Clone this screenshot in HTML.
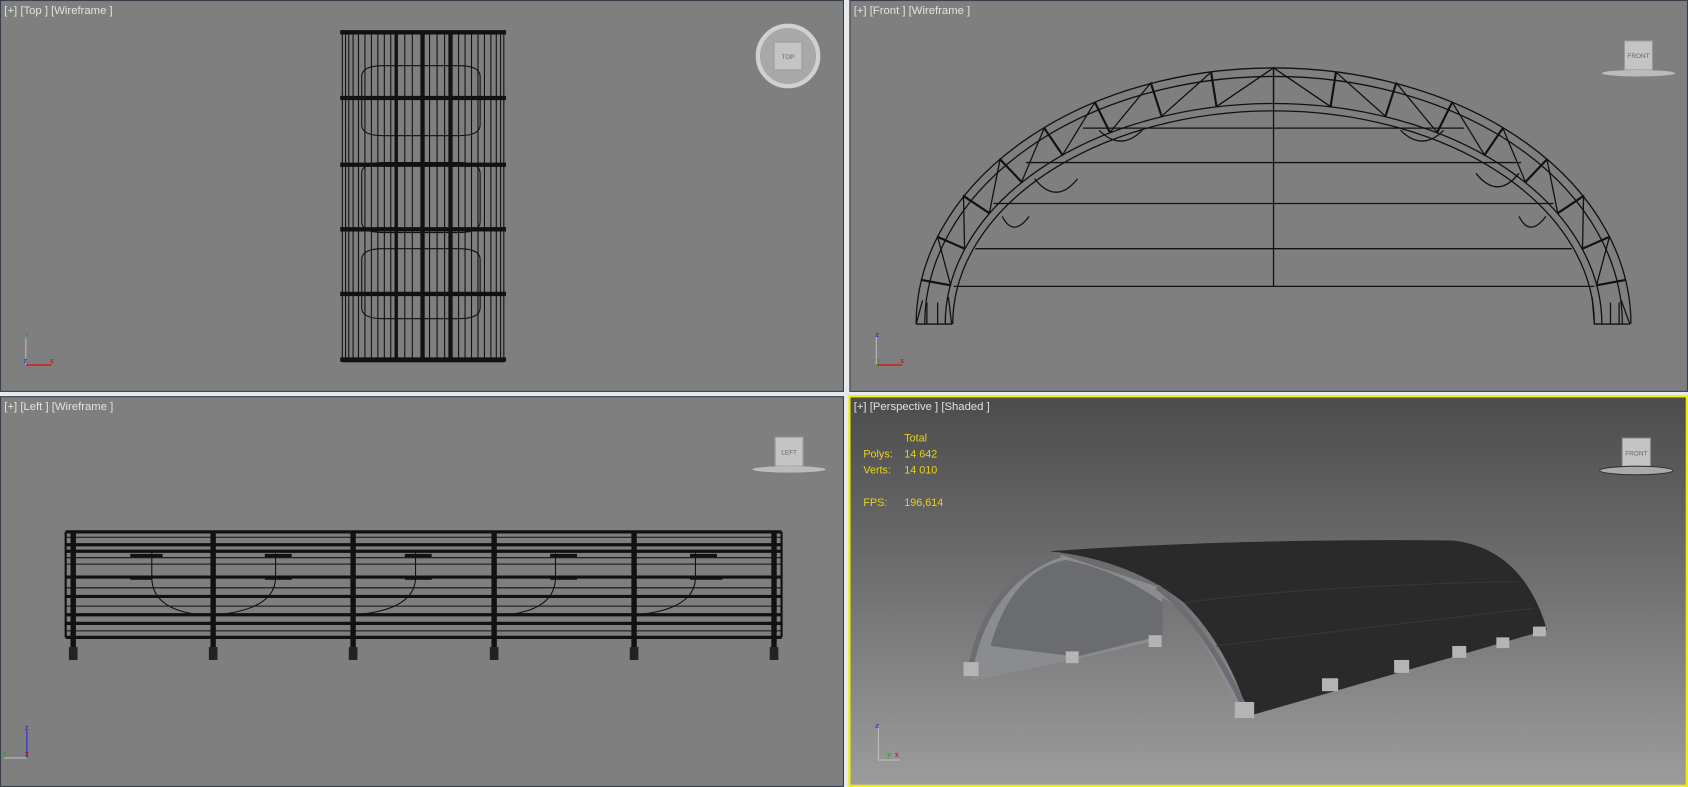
<!DOCTYPE html>
<html><head><meta charset="utf-8"><style>
html,body{margin:0;padding:0;width:1688px;height:787px;overflow:hidden;background:#e6eaee}
#s{position:absolute;left:0;top:0;width:1568px;height:731px;transform:scale(1.07653,1.07661);transform-origin:0 0}
.vp{position:absolute;background:#7f7f7f;box-sizing:border-box;border:1px solid #39404c;overflow:hidden}
.lbl{position:absolute;left:3px;top:3px;font:10.5px "Liberation Sans",sans-serif;color:#e2e2e2;white-space:pre}
svg{position:absolute;left:0;top:0}
.st{position:absolute;font:10px "Liberation Sans",sans-serif;color:#e8d21a}
</style></head><body><div id="s">

<div class="vp" style="left:0;top:0;width:784px;height:364px">
<div class="lbl">[+] [Top ] [Wireframe ]</div>
<svg width="784" height="364">
<g stroke="#111" fill="none" stroke-width="1">
<rect x="317" y="28" width="150" height="307"/>
<path d="M320 28V335M323 28V335M327 28V335M332 28V335M338 28V335M344 28V335M350 28V335M356 28V335M362 28V335M368 28V335M375 28V335M382 28V335M390 28V335M398 28V335M405 28V335M412 28V335M419 28V335M425 28V335M431 28V335M437 28V335M443 28V335M449 28V335M455 28V335M460 28V335M464 28V335"/>
<path d="M367 28V335M392 28V335M417 28V335" stroke-width="3"/>
<path d="M315 29H469M315 90H469M315 152H469M315 212H469M315 272H469M315 333H469" stroke-width="4"/>
<path d="M335 70q0-10 20-10h70q20 0 20 10v45q0 10-20 10h-70q-20 0-20-10z"/>
<path d="M335 160q0-10 20-10h70q20 0 20 10v45q0 10-20 10h-70q-20 0-20-10z"/>
<path d="M335 240q0-10 20-10h70q20 0 20 10v45q0 10-20 10h-70q-20 0-20-10z"/>
</g>
<circle cx="731" cy="51" r="28" fill="#a8a8a8" stroke="#d0d0d0" stroke-width="4"/>
<rect x="718" y="38" width="26" height="26" fill="#c4c4c4" stroke="#999"/>
<text x="731" y="54" font-size="6" fill="#666" text-anchor="middle" font-family="Liberation Sans">TOP</text>
<path d="M23 312V338H47" stroke="#bbb" fill="none"/><path d="M23 338H47" stroke="#c00"/>
<text x="22" y="312" font-size="8" fill="#1a1">y</text><text x="21" y="336" font-size="8" fill="#22c">z</text><text x="45" y="336" font-size="8" fill="#c00">x</text>
</svg></div>

<div class="vp" style="left:789px;top:0;width:779px;height:364px">
<div class="lbl">[+] [Front ] [Wireframe ]</div>
<svg width="779" height="364">
<g stroke="#111" fill="none" stroke-width="1.2" transform="translate(-789,0)">
<path d="M850 300A332 238 0 0 1 1514 300"/>
<path d="M858 300A324 230 0 0 1 1506 300"/>
<path d="M877 300A305 205 0 0 1 1487 300"/>
<path d="M884 300A298 198 0 0 1 1480 300"/>
<path d="M855 259L882 264L870 219L895 230L894 181L918 197L928 147L948 168L969 118L986 143L1016 94L1030 122L1068 76L1078 107L1124 66L1129 98L1182 62L1182 95"/>
<path d="M2364 0" />
<path d="M1509 259L1482 264L1494 219L1469 230L1470 181L1446 197L1436 147L1416 168L1395 118L1378 143L1348 94L1334 122L1296 76L1286 107L1240 66L1235 98L1182 62"/>
<path d="M855 259L882 264M870 219L895 230M894 181L918 197M928 147L948 168M969 118L986 143M1016 94L1030 122M1068 76L1078 107M1124 66L1129 98M1509 259L1482 264M1494 219L1469 230M1470 181L1446 197M1436 147L1416 168M1395 118L1378 143M1348 94L1334 122M1296 76L1286 107M1240 66L1235 98" stroke-width="2"/>
<path d="M885 265H1480M905 230H1459M922 188H1442M952 150H1412M1005 118H1359M1182 62V265"/>
<path d="M850 300H883L880 275M850 300L856 278M1513 300H1480L1478 275M1513 300L1505 278M860 300V280M870 300V280M1495 300V280M1503 300V280"/>
<path d="M960 165q20 25 40 0M1020 120q20 20 40 0M1300 120q20 20 40 0M1370 160q20 25 40 0M1410 200q10 20 25 0M930 200q10 20 25 0"/>
</g>
<rect x="719" y="37" width="26" height="27" fill="#c4c4c4" stroke="#999"/>
<ellipse cx="732" cy="67" rx="34" ry="3" fill="#bbb"/>
<text x="732" y="53" font-size="6" fill="#666" text-anchor="middle" font-family="Liberation Sans">FRONT</text>
<path d="M24 312V338H48" stroke="#bbb" fill="none"/><path d="M24 338H48" stroke="#c00"/>
<text x="23" y="312" font-size="8" fill="#22c">z</text><text x="24" y="336" font-size="8" fill="#1a1">y</text><text x="46" y="336" font-size="8" fill="#c00">x</text>
</svg></div>

<div class="vp" style="left:0;top:368px;width:784px;height:363px">
<div class="lbl">[+] [Left ] [Wireframe ]</div>
<svg width="784" height="363">
<g stroke="#111" fill="none" transform="translate(0,-368)">
<path d="M60 493H725M60 505H725M60 511H725M60 535H725M60 553H725M60 570H725M60 578H725M60 591H725" stroke-width="3"/>
<path d="M60 498H725M60 517H725M60 523H725M60 545H725M60 562H725M60 585H725" stroke-width="1"/>
<path d="M60 493V591M725 493V591" stroke-width="2"/>
<g stroke-width="5"><path d="M67 493V600M197 493V600M327 493V600M458 493V600M588 493V600M718 493V600"/></g>
<g fill="#222" stroke="none"><rect x="63" y="600" width="8" height="12"/><rect x="193" y="600" width="8" height="12"/><rect x="323" y="600" width="8" height="12"/><rect x="454" y="600" width="8" height="12"/><rect x="584" y="600" width="8" height="12"/><rect x="714" y="600" width="8" height="12"/></g>
<path d="M140 510v25q0 30 45 35M255 510v25q0 30-55 35M385 510v25q0 30-55 35M515 510v25q0 30-45 35M645 510v25q0 30-55 35"/>
<path d="M120 536h20M245 536h25M375 536h25M510 536h25M640 536h30M120 515h30M245 515h25M375 515h25M510 515h25M640 515h25" stroke-width="3"/>
</g>
<rect x="719" y="37" width="26" height="27" fill="#c4c4c4" stroke="#999"/>
<ellipse cx="732" cy="67" rx="34" ry="3" fill="#bbb"/>
<text x="732" y="53" font-size="6" fill="#666" text-anchor="middle" font-family="Liberation Sans">LEFT</text>
<path d="M24 309V335H2" stroke="#bbb" fill="none"/><path d="M24 335V309" stroke="#22c"/>
<text x="22" y="309" font-size="8" fill="#22c">z</text><text x="1" y="333" font-size="8" fill="#1a1">y</text><text x="22" y="333" font-size="8" fill="#c00">x</text>
</svg></div>

<div class="vp" style="left:788px;top:367px;width:780px;height:364px;border:2px solid #f2f000;background:linear-gradient(#4c4c4c,#6e6e6e 45%,#9c9c9c)">
<div class="lbl">[+] [Perspective ] [Shaded ]</div>
<div class="st" style="left:50px;top:33px">Total</div>
<div class="st" style="left:12px;top:48px">Polys:</div><div class="st" style="left:50px;top:48px">14 642</div>
<div class="st" style="left:12px;top:63px">Verts:</div><div class="st" style="left:50px;top:63px">14 010</div>
<div class="st" style="left:12px;top:93px">FPS:</div><div class="st" style="left:50px;top:93px">196,614</div>
<svg width="780" height="364">
<g transform="translate(-790,-369)">
<path d="M900 628Q915 540 985 515Q1030 530 1075 545Q1120 580 1160 665L1150 660Q1110 570 1080 555L1075 595L1000 612L905 632Z" fill="#8a8c90"/>
<path d="M920 600Q940 530 990 520Q1040 530 1080 560L1080 590L1000 610Z" fill="#6a6c70"/>
<path d="M975 512Q1150 500 1350 502Q1415 510 1437 585L1160 665Q1140 600 1100 560Q1050 520 975 512Z" fill="#2a2a2b"/>
<path d="M1100 560Q1200 545 1410 540M1130 600Q1250 585 1425 565" stroke="#3c3632" fill="none"/>
<path d="M985 515Q915 540 900 628M1075 545Q1120 580 1160 665" stroke="#6b6d72" stroke-width="5" fill="none"/>
<g fill="#b4b4b4"><rect x="895" y="615" width="14" height="13"/><rect x="990" y="605" width="12" height="11"/><rect x="1067" y="590" width="12" height="11"/><rect x="1147" y="652" width="18" height="15"/><rect x="1228" y="630" width="15" height="12"/><rect x="1295" y="613" width="14" height="12"/><rect x="1349" y="600" width="13" height="11"/><rect x="1390" y="592" width="12" height="10"/><rect x="1424" y="582" width="12" height="9"/></g>
</g>
<rect x="717" y="38" width="26" height="27" fill="#c4c4c4" stroke="#999"/>
<ellipse cx="730" cy="68" rx="34" ry="4" fill="#aaa" stroke="#333"/>
<text x="730" y="54" font-size="6" fill="#666" text-anchor="middle" font-family="Liberation Sans">FRONT</text>
<path d="M26 306V337H46" stroke="#bbb" fill="none"/>
<text x="23" y="307" font-size="8" fill="#22c">z</text><text x="34" y="334" font-size="8" fill="#1a1">y</text><text x="41" y="334" font-size="8" fill="#c00">x</text>
</svg></div>
</div></body></html>
